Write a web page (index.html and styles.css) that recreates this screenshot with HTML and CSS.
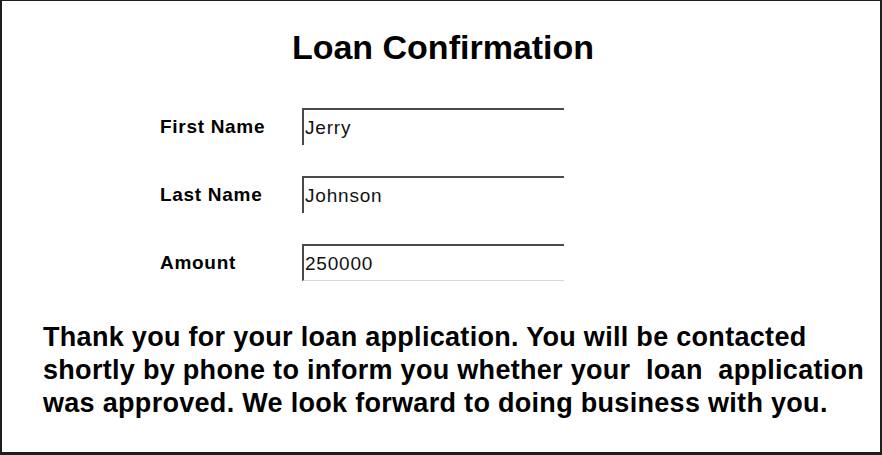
FILE: index.html
```html
<!DOCTYPE html>
<html lang="en">
<head>
<meta charset="utf-8">
<title>Loan Confirmation</title>
<link rel="stylesheet" href="styles.css">
</head>
<body>
<div class="page">
  <h1 class="title">Loan Confirmation</h1>
  <form class="form">
    <label class="label" for="first">First Name</label>
    <input class="field" id="first" type="text" value="Jerry">
    <label class="label" for="last">Last Name</label>
    <input class="field" id="last" type="text" value="Johnson">
    <label class="label" for="amount">Amount</label>
    <input class="field field-last" id="amount" type="text" value="250000">
  </form>
  <p class="note">Thank you for your loan application. You will be contacted shortly by phone to inform you whether your&nbsp; loan&nbsp; application was approved. We look forward to doing business with you.</p>
</div>
</body>
</html>
```

FILE: styles.css
```css
html, body {
  margin: 0;
  padding: 0;
  background: #ffffff;
}

.page {
  box-sizing: border-box;
  width: 882px;
  height: 455px;
  border-style: solid;
  border-color: #1e1e1e;
  border-width: 1px 2px 3px 2px;
  display: flex;
  flex-direction: column;
  font-family: "Liberation Sans", Arial, sans-serif;
  color: #000;
  overflow: hidden;
}

.title {
  margin: 27px 0 0 0;
  font-size: 34px;
  line-height: 38px;
  font-weight: bold;
  text-align: center;
  padding-left: 4px;
}

.form {
  margin: 42px 0 0 158px;
  display: grid;
  grid-template-columns: 142px 262px;
  row-gap: 31px;
}

.label {
  display: flex;
  align-items: center;
  height: 37px;
  padding-top: 1px;
  box-sizing: border-box;
  font-size: 19px;
  font-weight: bold;
  letter-spacing: 0.7px;
  color: #000;
}

.field {
  box-sizing: border-box;
  height: 37px;
  width: 262px;
  margin: 0;
  padding: 1px 0 0 1px;
  border: none;
  border-top: 2px solid #4a4a4a;
  border-left: 2px solid #4a4a4a;
  background: #fff;
  font-family: "Liberation Sans", Arial, sans-serif;
  font-size: 19px;
  letter-spacing: 0.8px;
  color: #111;
  outline: none;
}

.field-last {
  border-bottom: 1px solid #d8d8d8;
}

.note {
  margin: 40px 0 0 41px;
  width: 834px;
  font-size: 27px;
  line-height: 33px;
  letter-spacing: 0.3px;
  font-weight: bold;
  color: #000;
}
```
